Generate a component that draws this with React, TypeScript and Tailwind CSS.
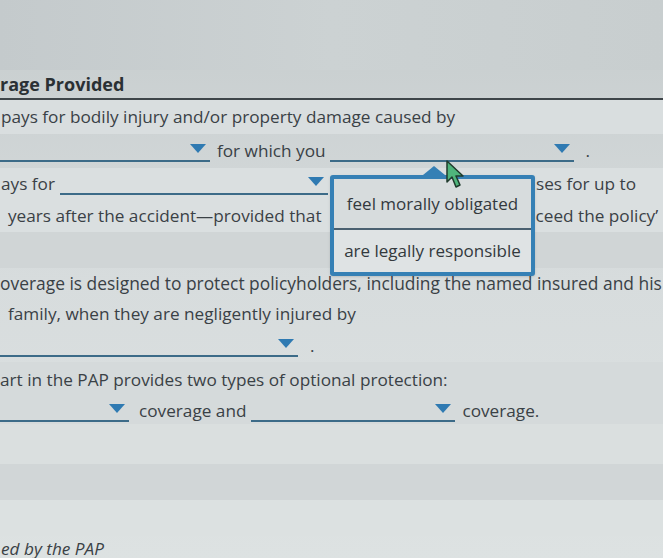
import type { ReactNode } from 'react';

const FONT = { fontFamily: '"Open Sans", "Noto Sans", sans-serif' };

function Caret() {
  return (
    <svg width="16" height="9" viewBox="0 0 16 9" className="shrink-0">
      <path d="M0 0 H16 L8 9 Z" fill="#2f7ab2" />
    </svg>
  );
}

function Blank({ width, className = '' }: { width: number; className?: string }) {
  return (
    <span
      className={`inline-flex h-[22px] shrink-0 items-start justify-end border-b-2 border-[#3c6b88] pr-[4px] pt-[4px] ${className}`}
      style={{ width }}
    >
      <Caret />
    </span>
  );
}

function Row({ h, children, className = '' }: { h: string; children: ReactNode; className?: string }) {
  return <div className={`flex items-center whitespace-nowrap ${h} ${className}`}>{children}</div>;
}

export default function App() {
  return (
    <div
      className="relative h-[558px] w-[663px] overflow-hidden bg-gradient-to-b from-[#c6cccd] via-[#d7dcdd] to-[#dde2e2] text-[17.2px] text-[#3a4146]"
      style={FONT}
    >
      <div className="h-[70px] bg-gradient-to-r from-[#c4cacc] via-[#ccd2d3] to-[#c8cecf]" />

      <Row h="h-[28px]">
        <span className="text-[18px] font-bold text-[#2a3034]">rage Provided</span>
      </Row>
      <div className="h-[2px] bg-[#3e4549]" />

      <Row h="h-[34px]" className="bg-[#d9dedf]">
        <span className="ml-[1px]">pays for bodily injury and/or property damage caused by</span>
      </Row>

      <Row h="h-[34px]">
        <Blank width={210} />
        <span className="ml-[7px]">for which you</span>
        <Blank width={244} className="ml-[4px]" />
        <span className="ml-[12px]">.</span>
      </Row>

      <Row h="h-[32px]" className="bg-[#dadfe0]">
        <span className="ml-[1px]">ays for</span>
        <Blank width={268} className="ml-[5px]" />
        <span className="ml-[208px]">ses for up to</span>
      </Row>

      <Row h="h-[32px]" className="bg-[#dadfe0]">
        <span className="ml-[8px]">years after the accident—provided that</span>
        <span className="ml-[214px]">ceed the policy’</span>
      </Row>

      <div className="h-[36px] bg-[#d0d5d6]" />

      <Row h="h-[30px]">
        <span className="text-[17.4px]">overage is designed to protect policyholders, including the named insured and his</span>
      </Row>

      <Row h="h-[32px]">
        <span className="ml-[8px]">family, when they are negligently injured by</span>
      </Row>

      <Row h="h-[32px]">
        <Blank width={298} />
        <span className="ml-[12px]">.</span>
      </Row>

      <Row h="h-[36px]" className="bg-[#d5dadb]">
        <span>art in the PAP provides two types of optional protection:</span>
      </Row>

      <Row h="h-[26px]" className="bg-[#d5dadb]">
        <Blank width={129} />
        <span className="ml-[10px]">coverage and</span>
        <Blank width={204} className="ml-[5px]" />
        <span className="ml-[7px]">coverage.</span>
      </Row>

      <div className="h-[40px] bg-[#dadfdf]" />
      <div className="h-[36px] bg-[#d1d6d7]" />
      <div className="h-[36px] bg-[#dce1e1]" />

      <Row h="h-[26px]">
        <span className="ml-[1px] italic">ed by the PAP</span>
      </Row>

      {/* open dropdown */}
      <div className="absolute left-[330px] top-[166px] w-[205px]">
        <div className="flex justify-center pl-[2px]">
          <div className="h-0 w-0 border-x-[11px] border-b-[9px] border-x-transparent border-b-[#3580b5]" />
        </div>
        <div className="rounded-[3px] border-[4px] border-[#3580b5] bg-[#dfe3e4] shadow-sm">
          <div className="flex h-[51px] items-center justify-center border-b-2 border-[#4a6070] bg-[#d7dcdd] text-[17px] text-[#33393d]">
            feel morally obligated
          </div>
          <div className="flex h-[42px] items-center justify-center text-[17px] text-[#33393d]">
            are legally responsible
          </div>
        </div>
      </div>

      {/* mouse pointer */}
      <svg className="absolute left-[446px] top-[160px]" width="20" height="30" viewBox="0 0 20 30">
        <path
          d="M1 1 L1 22 L6 17 L10 27 L14 25 L10 16 L17 16 Z"
          fill="#4fb57c"
          stroke="#1f3a2c"
          strokeWidth="1.5"
          strokeLinejoin="round"
        />
      </svg>
    </div>
  );
}
